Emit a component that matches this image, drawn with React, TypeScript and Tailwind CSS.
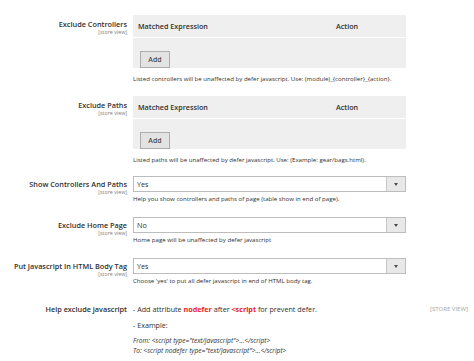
import React from 'react';

const font = { fontFamily: '"Open Sans", "Liberation Sans", sans-serif' };

function Label({ title, scope = true }: { title: string; scope?: boolean }) {
  return (
    <div className="w-[127px] shrink-0 text-right pr-0 leading-none">
      <div className="text-[7.3px] font-semibold text-[#303030] leading-[9px]">{title}</div>
      {scope && <div className="text-[5.3px] text-[#808080] leading-[7px]">[store view]</div>}
    </div>
  );
}

function Note({ children }: { children: React.ReactNode }) {
  return <div className="text-[6.1px] text-[#303030] leading-[8px] mt-[7px] -mb-[3px]">{children}</div>;
}

function DynamicTable() {
  return (
    <div className="w-[273px] bg-[#efefef]">
      <div className="flex items-center h-[23px] border-b border-white text-[7.2px] font-semibold text-[#303030]">
        <div className="pl-[5px] w-[203px]">Matched Expression</div>
        <div>Action</div>
      </div>
      <div className="h-[30px] pt-[6px] pl-[7px]">
        <button className="w-[30px] h-[17px] bg-[#e3e3e3] border border-[#adadad] text-[7px] text-[#514943] font-semibold leading-none">
          Add
        </button>
      </div>
    </div>
  );
}

function Select({ value }: { value: string }) {
  return (
    <div className="w-[273px] h-[16px] flex border border-[#bdbdbd] bg-white">
      <div className="flex-1 pl-[3px] text-[7.2px] text-[#303030] flex items-center">{value}</div>
      <div className="w-[19px] bg-[#e8e8e8] border-l border-[#c8c8c8] flex items-center justify-center">
        <svg width="4" height="3" viewBox="0 0 4 3">
          <path d="M0 0h4L2 3z" fill="#514943" />
        </svg>
      </div>
    </div>
  );
}

function Row({ label, children, className = '' }: { label: string; children: React.ReactNode; className?: string }) {
  return (
    <div className={`flex gap-[6px] ${className}`}>
      <div className="pt-[5px]">
        <Label title={label} />
      </div>
      <div>{children}</div>
    </div>
  );
}

function SelectRow({ label, value, note, className = '' }: { label: string; value: string; note: string; className?: string }) {
  return (
    <div className={`flex gap-[6px] ${className}`}>
      <div className="pt-[4px]">
        <Label title={label} />
      </div>
      <div>
        <Select value={value} />
        <div className="text-[6.1px] text-[#303030] leading-[8px] mt-[3px]">{note}</div>
      </div>
    </div>
  );
}

export default function App() {
  return (
    <div className="w-[474px] h-[361px] bg-white overflow-hidden" style={font}>
      <div className="pt-[15px]">
        <Row label="Exclude Controllers">
          <DynamicTable />
          <Note>Listed controllers will be unaffected by defer javascript. Use: (module)_{'{controller}'}_{'{action}'}.</Note>
        </Row>
        <Row label="Exclude Paths" className="mt-[16px]">
          <DynamicTable />
          <Note>Listed paths will be unaffected by defer javascript. Use: (Example: gear/bags.html).</Note>
        </Row>
        <SelectRow
          className="mt-[15px]"
          label="Show Controllers And Paths"
          value="Yes"
          note="Help you show controllers and paths of page (table show in end of page)."
        />
        <SelectRow
          className="mt-[14px]"
          label="Exclude Home Page"
          value="No"
          note="Home page will be unaffected by defer javascript"
        />
        <SelectRow
          className="mt-[14px]"
          label="Put Javascript In HTML Body Tag"
          value="Yes"
          note="Choose 'yes' to put all defer javascript in end of HTML body tag."
        />
        <div className="flex gap-[6px] mt-[19px]">
          <div className="w-[127px] shrink-0 text-right text-[7.3px] font-semibold text-[#303030] leading-[10px]">
            Help exclude javascript
          </div>
          <div className="w-[273px] text-[7.2px] text-[#303030] leading-[10px]">
            <div>
              - Add attribute <span className="text-[#eb1c24] font-bold">nodefer</span> after{' '}
              <span className="text-[#eb1c24] font-bold">&lt;script</span> for prevent defer.
            </div>
            <div className="mt-[6px]">- Example:</div>
            <div className="mt-[6px] italic text-[6.6px] leading-[10px]">
              From: &lt;script type="text/javascript"&gt;...&lt;/script&gt;
            </div>
            <div className="italic text-[6.6px] leading-[10px]">
              To: &lt;script nodefer type="text/javascript"&gt;...&lt;/script&gt;
            </div>
          </div>
          <div className="pl-[18px] pt-[1px] text-[6px] text-[#a6a6a6] leading-[8px]">[STORE VIEW]</div>
        </div>
      </div>
    </div>
  );
}
